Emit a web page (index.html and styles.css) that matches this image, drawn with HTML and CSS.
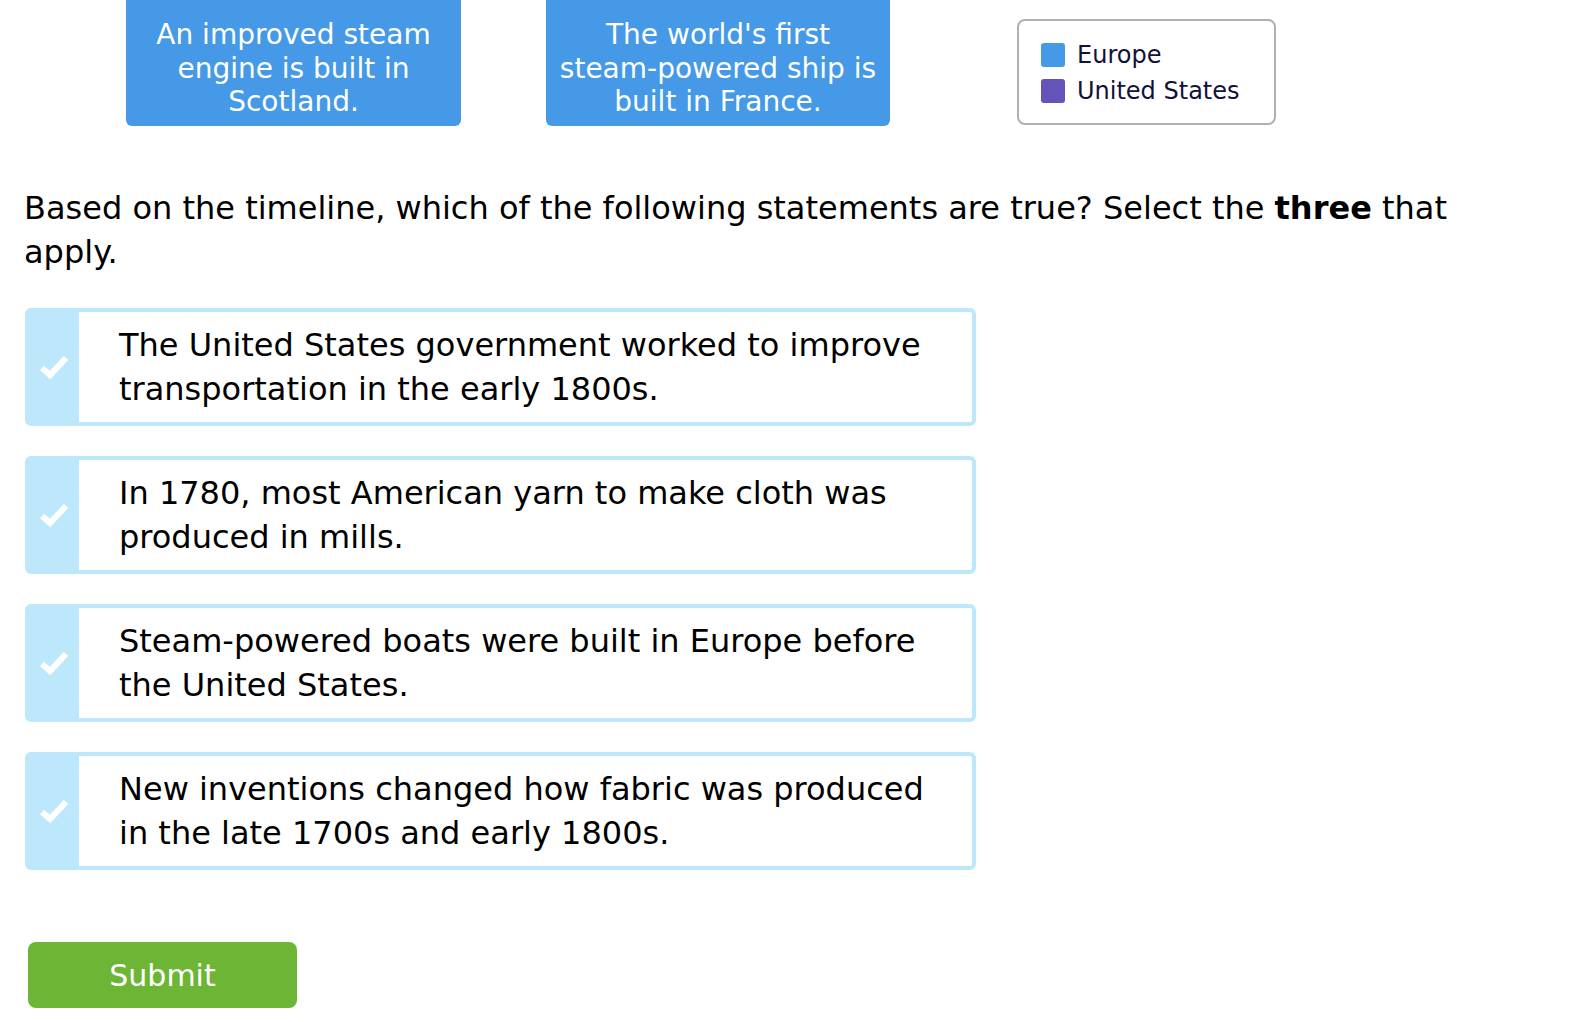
FILE: index.html
```html
<!DOCTYPE html>
<html lang="en">
<head>
    <meta charset="UTF-8">
    <title>Timeline question</title>
    <link rel="stylesheet" href="styles.css">
</head>
<body>
    <div class="top">
        <div class="event ev1">An improved steam engine is built in Scotland.</div>
        <div class="event ev2">The world's first <span class="nowrap">steam-powered</span> ship is built in France.</div>
        <div class="legend">
            <div class="key"><span class="sw europe"></span>Europe</div>
            <div class="key"><span class="sw us"></span>United States</div>
        </div>
    </div>

    <p class="question">Based on the timeline, which of the following statements are true? Select the <b>three</b> that apply.</p>

    <div class="choices">
        <div class="choice">
            <div class="tick"><svg width="30" height="26" viewBox="0 0 30 26"><path d="M3 14 L11 21 L27 4" fill="none" stroke="#fff" stroke-width="6"/></svg></div>
            <div class="txt">The United States government worked to improve transportation in the early 1800s.</div>
        </div>
        <div class="choice">
            <div class="tick"><svg width="30" height="26" viewBox="0 0 30 26"><path d="M3 14 L11 21 L27 4" fill="none" stroke="#fff" stroke-width="6"/></svg></div>
            <div class="txt">In 1780, most American yarn to make cloth was produced in mills.</div>
        </div>
        <div class="choice">
            <div class="tick"><svg width="30" height="26" viewBox="0 0 30 26"><path d="M3 14 L11 21 L27 4" fill="none" stroke="#fff" stroke-width="6"/></svg></div>
            <div class="txt">Steam-powered boats were built in Europe before the United States.</div>
        </div>
        <div class="choice">
            <div class="tick"><svg width="30" height="26" viewBox="0 0 30 26"><path d="M3 14 L11 21 L27 4" fill="none" stroke="#fff" stroke-width="6"/></svg></div>
            <div class="txt">New inventions changed how fabric was produced in the late 1700s and early 1800s.</div>
        </div>
    </div>

    <button class="submit">Submit</button>
</body>
</html>
```

FILE: styles.css
```css
*{margin:0;padding:0;box-sizing:border-box;font-family:"DejaVu Sans",Verdana,sans-serif;}

body{background:#fff;color:#000;}

.top{display:flex;align-items:flex-start;padding-left:126px;height:126px;}

.event{
    background:#4599e6;
    color:#fff;
    font-size:28px;
    line-height:33.5px;
    text-align:center;
    padding:18px 10px 8px;
    border-radius:0 0 6px 6px;
    height:126px;
}
.ev1{width:335px;}
.ev2{width:344px;margin-left:85px;}
.nowrap{white-space:nowrap;}

.legend{
    margin-left:127px;
    margin-top:19px;
    width:259px;
    height:106px;
    border:2px solid #b0b0b0;
    border-radius:8px;
    padding:16px 0 0 22px;
    color:#11113a;
    font-size:24px;
}
.key{display:flex;align-items:center;height:36px;}
.sw{width:24px;height:24px;border-radius:3px;margin-right:12px;}
.europe{background:#4599e6;}
.us{background:#6453b8;}

.question{
    margin:60px 0 0 24px;
    font-size:32px;
    line-height:44px;
    width:1520px;
}

.choices{margin:34px 0 0 25px;display:flex;flex-direction:column;gap:30px;}

.choice{
    display:flex;
    width:951px;
    height:118px;
    border:4px solid #bde8fb;
    border-radius:6px;
    background:#fff;
}
.tick{width:50px;background:#bde8fb;display:flex;align-items:center;justify-content:center;}
.txt{flex:1;display:flex;align-items:center;padding:0 20px 0 40px;font-size:32px;line-height:44px;}

.submit{
    margin:72px 0 0 28px;
    width:269px;
    height:66px;
    background:#6db535;
    color:#fff;
    border:none;
    border-radius:8px;
    font-size:30px;
}
```
